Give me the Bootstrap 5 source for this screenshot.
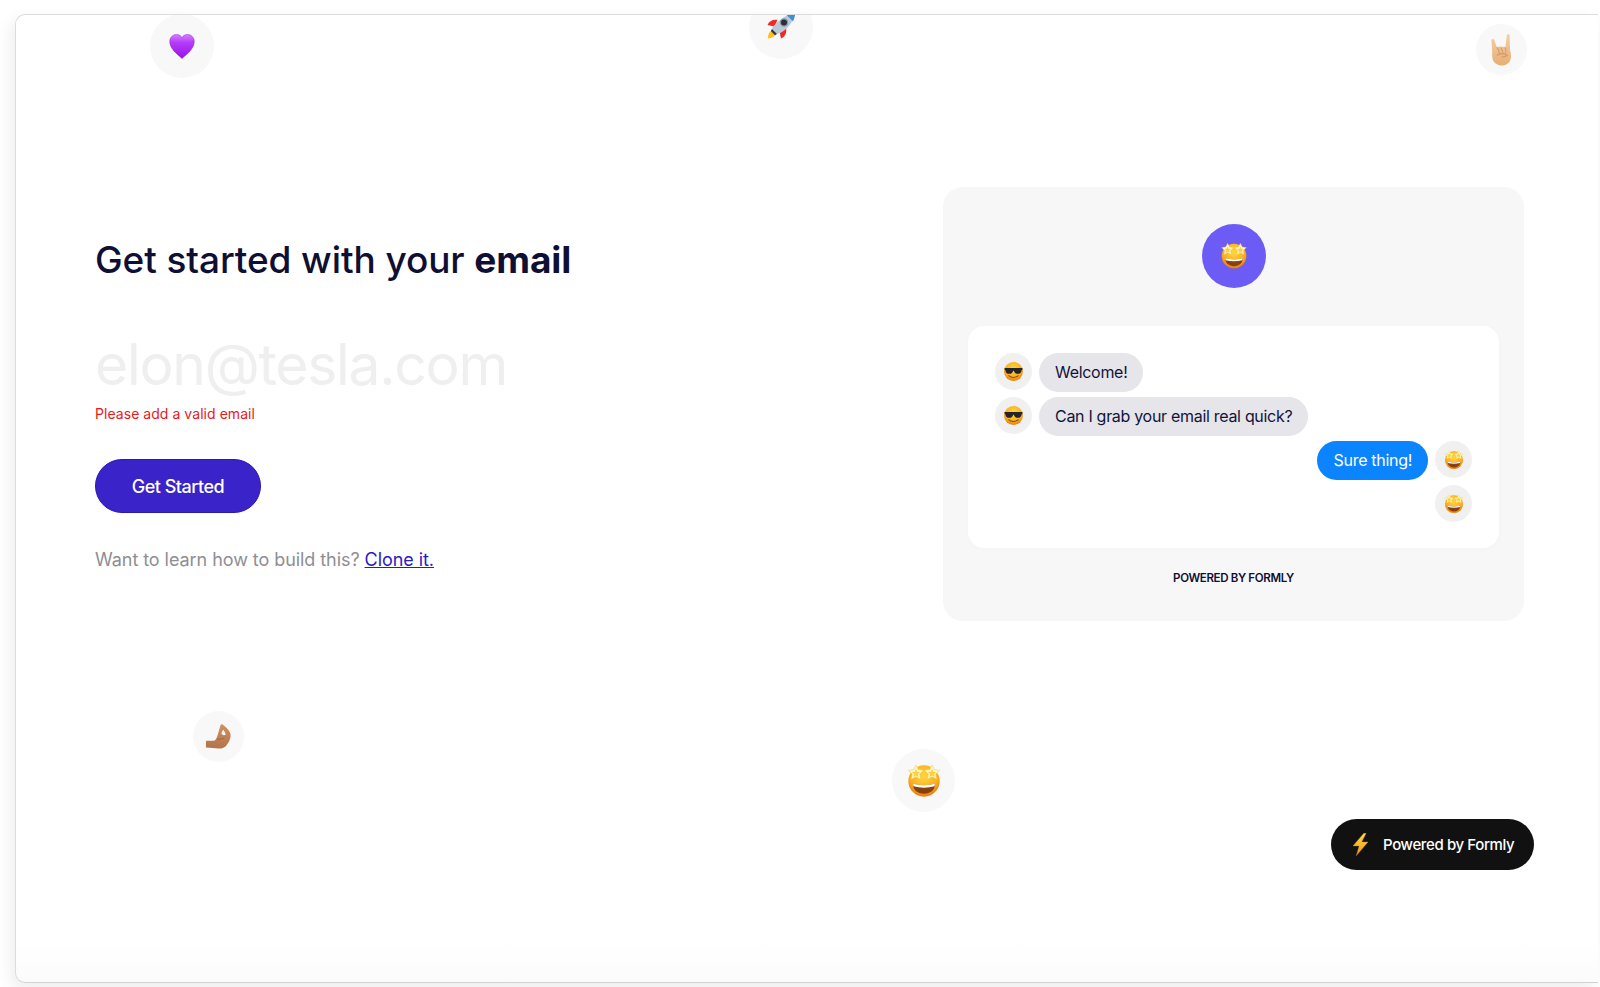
<!doctype html>
<html lang="en">
<head>
<meta charset="utf-8">
<title>Get started</title>
<link href="https://cdn.jsdelivr.net/npm/bootstrap@5.3.0/dist/css/bootstrap.min.css" rel="stylesheet">
<style>
html,body{height:100%;background:#fff;overflow:hidden}
body{font-family:Inter,"Liberation Sans",sans-serif;color:#0f0f33}
.frame-shell{position:relative;height:969px;margin:14px 2px 0 15px;border:1px solid #dcdcdc;border-right:0;border-bottom-color:#d2d2d2;border-radius:10px 0 0 10px;background:linear-gradient(#fff 96%,#fbfbfb);box-shadow:-4px 6px 16px rgba(0,0,0,.07);overflow:hidden}
.intro-col{width:600px;margin-left:79px;padding-top:220px}
.intro-title{font-size:37px;line-height:50px;font-weight:500;letter-spacing:-.09px;margin:0 0 46px;color:#0f0f33}
.intro-title b{font-weight:700}
.email-field.form-control{font-family:Inter,sans-serif;font-size:57px;font-weight:400;line-height:68px;height:68px;padding:0;border:0;box-shadow:none;background:transparent;letter-spacing:-1.3px}
.email-field.form-control::placeholder{color:#efefef;opacity:1}
.error-note{color:#e8191c;font-size:14px;line-height:20px;margin:5px 0 35px;letter-spacing:.05px}
.cta-btn.btn{width:166px;height:54px;border-radius:27px;background:#3a23c9;border:1px solid #2a18b8;color:#fff;font-size:18px;font-weight:500;padding:0;letter-spacing:-.5px}
.clone-note{color:#8e8e93;font-size:18px;line-height:28px;margin:33px 0 0;letter-spacing:-.06px}
.clone-note a{color:#2c1ac4}
.demo-panel{width:581px;height:434px;margin:172px 74px 0 0;background:#f7f7f8;border-radius:20px;padding:37px 25px 0}
.demo-avatar{width:64px;height:64px;border-radius:50%;background:#6c5cf5}
.chat-sheet{height:222px;margin-top:38px;background:#fff;border-radius:16px;padding:27px 27px 0 27px;box-shadow:0 1px 6px rgba(0,0,0,.02)}
.chat-line{height:39px;margin-bottom:5px;gap:7px}
.chat-face{width:37px;height:37px;border-radius:50%;background:#f0f0f1;flex:none;align-self:flex-start}
.chat-bubble{height:39px;border-radius:20px;padding:0 16px;font-size:16px;line-height:38px;background:#e5e5ea;color:#13133a;white-space:nowrap;letter-spacing:-.3px}
.chat-bubble.is-me{background:#0a84ff;color:#fff;padding-left:17px}
.panel-foot{font-size:11.500px;font-weight:600;color:#0f0f33;text-align:center;margin-top:22px;line-height:16px;letter-spacing:-.35px}
.float-dot{position:absolute;border-radius:50%;background:#f8f8f9}
.made-badge{position:absolute;left:1315px;top:804px;width:203px;height:51px;border-radius:26px;background:#111;color:#fff;font-size:15px;font-weight:500;padding-left:21px;gap:14px;letter-spacing:-.38px}
.made-badge span{padding-top:2px}
.svg-defs{position:absolute;width:0;height:0}
</style>
</head>
<body>
<svg class="svg-defs" aria-hidden="true">
  <defs>
    <radialGradient id="gFace" cx=".5" cy=".35" r=".68"><stop offset="0" stop-color="#ffd640"/><stop offset=".65" stop-color="#fbae1e"/><stop offset="1" stop-color="#e2740b"/></radialGradient>
    <linearGradient id="gHeart" x1="0" y1="0" x2="0" y2="1"><stop offset="0" stop-color="#d77bff"/><stop offset=".35" stop-color="#b33cf8"/><stop offset="1" stop-color="#9a10ea"/></linearGradient>
    <linearGradient id="gHand" x1="0" y1="0" x2="0" y2="1"><stop offset="0" stop-color="#f4cfa4"/><stop offset="1" stop-color="#e8ae74"/></linearGradient>
    <linearGradient id="gPinch" x1="0" y1="0" x2="0" y2="1"><stop offset="0" stop-color="#cf9264"/><stop offset="1" stop-color="#b27448"/></linearGradient>
    <linearGradient id="gBolt" x1="0" y1="0" x2="0" y2="1"><stop offset="0" stop-color="#ffd84a"/><stop offset="1" stop-color="#f09a12"/></linearGradient>
    <symbol id="eStar" viewBox="0 1.500 40 40">
      <circle cx="20" cy="21.500" r="16.500" fill="url(#gFace)"/>
      <path d="M8.500 24.500c7 2 16 2 23 0 .5 6-4.500 10.500-11.500 10.500S8 30.500 8.500 24.500z" fill="#8a400e"/>
      <path d="M8.500 24.500c7 2 16 2 23 0l-.4 2.600c-7 1.900-15.200 1.900-22.200 0z" fill="#fff"/>
      <path d="M11.500 4.500l2.500 5 5.500.8-4 3.900.9 5.500-4.900-2.600-4.900 2.600.9-5.500-4-3.900 5.500-.8z" fill="#fff6c8" stroke="#f3c83e" stroke-width=".5"/>
      <path d="M28.500 4.500l2.500 5 5.500.8-4 3.900.9 5.500-4.900-2.600-4.900 2.600.9-5.500-4-3.900 5.500-.8z" fill="#fff6c8" stroke="#f3c83e" stroke-width=".5"/>
      <path d="M11.500 9l1.300 2.700 3 .4-2.200 2.100.5 3-2.600-1.400-2.600 1.400.5-3-2.200-2.100 3-.4zM28.500 9l1.300 2.700 3 .4-2.200 2.100.5 3-2.600-1.400-2.600 1.400.5-3-2.200-2.100 3-.4z" fill="#fcd13a"/>
    </symbol>
    <symbol id="eCool" viewBox="0 0 40 40">
      <circle cx="20" cy="20" r="18" fill="url(#gFace)"/>
      <path d="M3 13.500h34v3.200l-1.500.8c-.5 4.500-3 7-7.500 7-4.200 0-6.500-2.500-7.300-6h-1.400c-.8 3.500-3.100 6-7.300 6-4.500 0-7-2.500-7.500-7L3 16.700z" fill="#23232b"/>
      <path d="M11 28c2.500 2.600 5.500 3.600 9 3.600s6.500-1 9-3.600" fill="none" stroke="#8a4a10" stroke-width="2" stroke-linecap="round"/>
    </symbol>
    <symbol id="eHeart" viewBox="0 0 28 28">
      <path d="M14 26.500C8 21 1.300 16 1.300 8.800 1.300 4.600 4.500 1.500 8.300 1.500c2.500 0 4.500 1.200 5.700 3.300 1.200-2.100 3.200-3.300 5.700-3.300 3.800 0 7 3.100 7 7.300C26.700 16 20 21 14 26.500z" fill="url(#gHeart)" stroke="#9212d9" stroke-width=".5"/>
    </symbol>
    <symbol id="eRocket" viewBox="0 2 28 28">
      <path d="M5 19.500c-2.500 1-4 3.800-4.300 8 4.200-.3 7-1.800 8-4.300z" fill="#ffc21c"/>
      <path d="M7.500 15.500L.5 14c1.500-3.800 5-5.800 10-5.200z" fill="#ef2a24"/>
      <path d="M12.500 20.500l1.500 7c3.800-1.500 5.800-5 5.200-10z" fill="#ef2a24"/>
      <path d="M5 18l5 5c2-.4 4.500-1.500 6.500-3 6-4.500 10.500-11 12-18.500C21 3 14.500 7.500 9 12.500 7 14.500 5.400 16 5 18z" fill="#b9c9d8"/>
      <path d="M19.500 3.800c2.500-1.200 5.500-2 9-2.300-.5 3.300-1.300 6.300-2.500 9z" fill="#3f8fd8"/>
      <circle cx="17" cy="11.500" r="3.600" fill="#2b2e3a" stroke="#8a98a6" stroke-width="1.200"/>
      <path d="M5 18l5 5-2 1.200-4.200-4.200z" fill="#30343f"/>
    </symbol>
    <symbol id="eRock" viewBox="0 0 28 34">
      <path d="M3.500 7.500c-.2-1.500 2.300-2.200 2.900-.6l2.800 7.800c1.300-.7 2.700-1 4-.8 1.600.2 3.600.5 4.900.2l1.400-11.500c.2-1.800 2.800-1.800 2.900 0l.5 15c1 4 1.400 7 .4 10-1.300 3.800-5 6-9.700 6C8.300 33 4.500 29.600 4.400 24.500c-.1-2-.2-4 0-6z" fill="url(#gHand)"/>
      <path d="M9.500 15c1.700 2 2.200 3.800 2 5.500M13.500 15.500c1.500 1.700 2 3.600 1.900 5.500M17.800 15.500c.9 1.900 1 3.500.7 5.200M9.500 23c3-2.300 7.500-2.300 10.500.2-1.500 1-3.500 1.700-5.500 1.300" fill="none" stroke="#d19a66" stroke-width="1.100" stroke-linecap="round"/>
    </symbol>
    <symbol id="ePinch" viewBox="0 0 28 28">
      <path d="M1 25.500v-6c0-.5.500-1 1-1h6c2 0 3-1 4-3 1.500-3.500 2.500-8 4-13 .5-1.500 2-1.500 3-.5 3 2.500 7 6 7.500 10 .5 4-2 9-5 12-2 1.500-4 2.500-7 2.500z" fill="url(#gPinch)"/>
      <path d="M17 11c.5-1.500 1-3 2-4 1 1.500 2 3 2.500 5-1.500 1-3 1-4.500-1z" fill="#f8f8f9"/>
      <path d="M13 16.500c2.500.5 4.500.3 6.500-.8" fill="none" stroke="#9a5f38" stroke-width=".8" stroke-linecap="round"/>
    </symbol>
    <symbol id="eBolt" viewBox="0 0 18 24">
      <path d="M12.500 0L1 13.500h6.500L4.500 24 17 9.300h-6.700L15 0z" fill="url(#gBolt)" stroke="#c77a10" stroke-width=".4"/>
    </symbol>
  </defs>
</svg>

<main class="frame-shell d-flex justify-content-between">
  <section class="intro-col">
    <h1 class="intro-title">Get started with your <b>email</b></h1>
    <input class="form-control email-field" type="email" placeholder="elon@tesla.com" aria-label="Email">
    <div class="error-note">Please add a valid email</div>
    <button class="btn cta-btn" type="button">Get Started</button>
    <p class="clone-note">Want to learn how to build this? <a href="#">Clone it.</a></p>
  </section>

  <aside class="demo-panel flex-shrink-0">
    <div class="demo-avatar d-flex align-items-center justify-content-center mx-auto">
      <svg width="30" height="30"><use href="#eStar"/></svg>
    </div>
    <div class="chat-sheet">
      <div class="chat-line d-flex align-items-center">
        <div class="chat-face d-flex align-items-center justify-content-center"><svg width="21" height="21"><use href="#eCool"/></svg></div>
        <div class="chat-bubble">Welcome!</div>
      </div>
      <div class="chat-line d-flex align-items-center">
        <div class="chat-face d-flex align-items-center justify-content-center"><svg width="21" height="21"><use href="#eCool"/></svg></div>
        <div class="chat-bubble">Can I grab your email real quick?</div>
      </div>
      <div class="chat-line d-flex align-items-center justify-content-end">
        <div class="chat-bubble is-me">Sure thing!</div>
        <div class="chat-face d-flex align-items-center justify-content-center"><svg width="22" height="22"><use href="#eStar"/></svg></div>
      </div>
      <div class="chat-line d-flex align-items-center justify-content-end">
        <div class="chat-face d-flex align-items-center justify-content-center"><svg width="22" height="22"><use href="#eStar"/></svg></div>
      </div>
    </div>
    <div class="panel-foot text-uppercase">Powered by Formly</div>
  </aside>

  <div class="float-dot d-flex align-items-center justify-content-center" style="left:134px;top:-1px;width:64px;height:64px"><svg width="28" height="27"><use href="#eHeart"/></svg></div>
  <div class="float-dot d-flex align-items-center justify-content-center" style="left:733px;top:-20px;width:64px;height:64px"><svg width="28" height="28"><use href="#eRocket"/></svg></div>
  <div class="float-dot d-flex align-items-center justify-content-center" style="left:1460px;top:9px;width:51px;height:51px"><svg width="27" height="33"><use href="#eRock"/></svg></div>
  <div class="float-dot d-flex align-items-center justify-content-center" style="left:177px;top:696px;width:51px;height:51px"><svg width="27" height="27"><use href="#ePinch"/></svg></div>
  <div class="float-dot d-flex align-items-center justify-content-center" style="left:876px;top:734px;width:63px;height:63px"><svg width="38" height="38"><use href="#eStar"/></svg></div>

  <div class="made-badge d-flex align-items-center">
    <svg width="17" height="23"><use href="#eBolt"/></svg>
    <span>Powered by Formly</span>
  </div>
</main>
<script src="https://cdn.jsdelivr.net/npm/bootstrap@5.3.0/dist/js/bootstrap.bundle.min.js"></script>
</body>
</html>
